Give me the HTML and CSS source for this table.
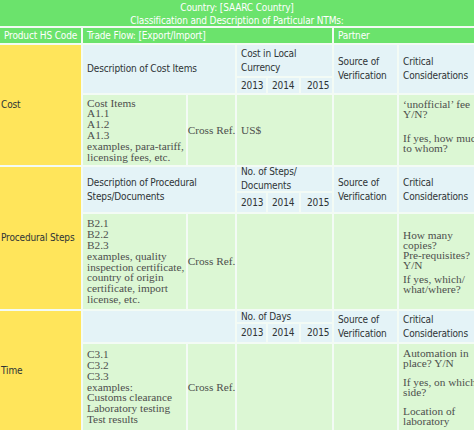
FILE: index.html
```html
<!DOCTYPE html>
<html>
<head>
<meta charset="utf-8">
<link rel="stylesheet" href="styles.css">
</head>
<body>
<div class="sheet">
  <div class="cell hd title c8">
    <span>Country: [SAARC Country]</span>
    <span>Classification and Description of Particular NTMs:</span>
  </div>

  <div class="cell hd">Product HS Code</div>
  <div class="cell hd c5">Trade Flow: [Export/Import]</div>
  <div class="cell hd c2">Partner</div>

  <!-- Cost -->
  <div class="cell sec r3">Cost</div>
  <div class="cell lb c2 r2">Description of Cost Items</div>
  <div class="cell lb c3">Cost in Local<br>Currency</div>
  <div class="cell lb r2">Source of<br>Verification</div>
  <div class="cell lb r2">Critical<br>Considerations</div>
  <div class="cell lb">2013</div>
  <div class="cell lb">2014</div>
  <div class="cell lb yr-last">2015</div>
  <div class="cell lg">Cost Items<br>A1.1<br>A1.2<br>A1.3<br>examples, para-tariff,<br>licensing fees, etc.</div>
  <div class="cell lg ref">Cross Ref.</div>
  <div class="cell lg c3">US$</div>
  <div class="cell lg"></div>
  <div class="cell lg crit gap-l">
    <p>‘unofficial’ fee<br>Y/N?</p>
    <p>If yes, how much/<br>to whom?</p>
  </div>

  <!-- Procedural Steps -->
  <div class="cell sec r3">Procedural Steps</div>
  <div class="cell lb c2 r2">Description of Procedural<br>Steps/Documents</div>
  <div class="cell lb c3">No. of Steps/<br>Documents</div>
  <div class="cell lb r2">Source of<br>Verification</div>
  <div class="cell lb r2">Critical<br>Considerations</div>
  <div class="cell lb">2013</div>
  <div class="cell lb">2014</div>
  <div class="cell lb yr-last">2015</div>
  <div class="cell lg">B2.1<br>B2.2<br>B2.3<br>examples, quality<br>inspection certificate,<br>country of origin<br>certificate, import<br>license, etc.</div>
  <div class="cell lg ref">Cross Ref.</div>
  <div class="cell lg c3"></div>
  <div class="cell lg"></div>
  <div class="cell lg crit gap-s">
    <p>How many<br>copies?<br>Pre-requisites?<br>Y/N</p>
    <p>If yes, which/<br>what/where?</p>
  </div>

  <!-- Time -->
  <div class="cell sec r3">Time</div>
  <div class="cell lb c2 r2"></div>
  <div class="cell lb c3">No. of Days</div>
  <div class="cell lb r2">Source of<br>Verification</div>
  <div class="cell lb r2">Critical<br>Considerations</div>
  <div class="cell lb">2013</div>
  <div class="cell lb">2014</div>
  <div class="cell lb yr-last">2015</div>
  <div class="cell lg">C3.1<br>C3.2<br>C3.3<br>examples:<br>Customs clearance<br>Laboratory testing<br>Test results</div>
  <div class="cell lg ref">Cross Ref.</div>
  <div class="cell lg c3"></div>
  <div class="cell lg"></div>
  <div class="cell lg crit gap-m">
    <p>Automation in<br>place? Y/N</p>
    <p>If yes, on which<br>side?</p>
    <p>Location of<br>laboratory</p>
  </div>
</div>
</body>
</html>
```

FILE: styles.css
```css
html, body {
  margin: 0;
  padding: 0;
  overflow: hidden;
  background: #ffffff;
}

.sheet {
  display: grid;
  width: 474px;
  grid-template-columns: 81px 103px 47px 29px 31px 31px 63px 75px;
  grid-template-rows: 26px 15px 31px 15px 70px 24px 19px 95px 11px 18px 86px;
  gap: 2px;
  background: #f3fbf5;
  font-family: "DejaVu Sans Condensed", "Liberation Sans", sans-serif;
  font-size: 10px;
  letter-spacing: -0.15px;
  line-height: 14px;
  color: #2e3436;
}

.cell {
  display: flex;
  flex-direction: column;
  justify-content: center;
  padding: 0 4px;
  white-space: nowrap;
  min-width: 0;
}

.c2 { grid-column: span 2; }
.c3 { grid-column: span 3; }
.c5 { grid-column: span 5; }
.c8 { grid-column: span 8; }
.r2 { grid-row: span 2; }
.r3 { grid-row: span 3; }

.hd {
  background: #6be36c;
  color: #ffffff;
}

.title {
  align-items: center;
  line-height: 13px;
  padding-top: 1px;
}

.sec {
  background: #ffe55b;
  padding: 0 1px;
  color: #2e3436;
}

.lb {
  background: #e4f3f7;
}

.yr-last {
  padding-left: 6px;
}

.lg {
  background: #dcf7d4;
  font-family: "Liberation Serif", "DejaVu Serif", serif;
  font-size: 11.3px;
  letter-spacing: 0;
  line-height: 10.8px;
  color: #4d4f4d;
}

.ref {
  align-items: center;
  padding: 0;
}

.crit p {
  margin: 0;
  line-height: 10px;
}

.gap-l { padding-bottom: 8px; }
.gap-l p + p { margin-top: 14px; }
.gap-s p + p { margin-top: 4px; }
.gap-m p + p { margin-top: 9px; }
```
